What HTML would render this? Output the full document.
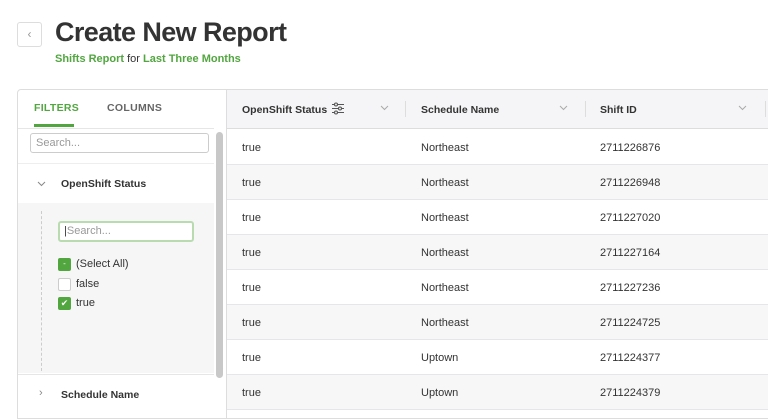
<!DOCTYPE html>
<html><head><meta charset="utf-8"><style>
*{box-sizing:border-box;margin:0;padding:0}
body{width:768px;height:413px;overflow:hidden;background:#fff;font-family:"Liberation Sans",sans-serif;color:#333;position:relative}
.a{position:absolute}
.back{left:17px;top:22px;width:25px;height:25px;border:1px solid #ddd;border-radius:3px;color:#999;font-size:12px;text-align:center;line-height:22px}
h1{position:absolute;left:55px;top:17px;font-size:27px;font-weight:bold;color:#333;letter-spacing:-0.6px}
.sub{left:55px;top:53px;font-size:11px;color:#333}
.g{color:#52a640;font-weight:bold}
.panel{left:17px;top:89px;width:760px;height:330px;border:1px solid #ddd;border-radius:4px 0 0 0}
.side{left:17px;top:89px;width:210px;height:330px;border-right:1px solid #ddd}
.tab{font-size:10.5px;font-weight:bold;top:102px;letter-spacing:0.3px}
.inp{border:1px solid #ccc;border-radius:3px;font-size:11px;color:#999;padding:3px 5px;background:#fff}
.cb{width:13px;height:13px;border-radius:2px;left:58px}
.lbl{left:76px;font-size:11px;color:#333}
.hdr{left:227px;top:90px;width:541px;height:39px;background:#f5f5f7;border-bottom:1px solid #ddd}
.hc{font-size:10.5px;font-weight:bold;top:104px;color:#333}
.car{top:105px}
.row{left:227px;width:541px;height:35px;border-bottom:1px solid #e6e6ea;font-size:11px}
.row span{position:absolute;top:12px}
</style></head><body>
<div class="a back">‹</div>
<h1>Create New Report</h1>
<div class="a sub"><span class="g">Shifts Report</span> for <span class="g">Last Three Months</span></div>
<div class="a panel"></div>
<div class="a hdr"></div>
<div class="a hc" style="left:242px">OpenShift Status</div>
<svg class="a" style="left:331px;top:102px" width="14" height="13" viewBox="0 0 14 13" fill="none" stroke="#555" stroke-width="1.1"><path d="M1 2.5h12M1 6.5h12M1 10.5h12"/><circle cx="5" cy="2.5" r="1.5" fill="#f5f5f7"/><circle cx="9" cy="6.5" r="1.5" fill="#f5f5f7"/><circle cx="5" cy="10.5" r="1.5" fill="#f5f5f7"/></svg>
<svg class="a car" style="left:380px" width="9" height="6" viewBox="0 0 9 6"><path d="M1 1l3.5 3.5L8 1" fill="none" stroke="#aaa" stroke-width="1"/></svg>
<div class="a" style="left:405px;top:101px;width:1px;height:16px;background:#ddd"></div>
<div class="a hc" style="left:421px">Schedule Name</div>
<svg class="a car" style="left:559px" width="9" height="6" viewBox="0 0 9 6"><path d="M1 1l3.5 3.5L8 1" fill="none" stroke="#aaa" stroke-width="1"/></svg>
<div class="a" style="left:585px;top:101px;width:1px;height:16px;background:#ddd"></div>
<div class="a hc" style="left:600px">Shift ID</div>
<svg class="a car" style="left:738px" width="9" height="6" viewBox="0 0 9 6"><path d="M1 1l3.5 3.5L8 1" fill="none" stroke="#aaa" stroke-width="1"/></svg>
<div class="a" style="left:765px;top:101px;width:1px;height:16px;background:#ddd"></div>

<div class="a row" style="top:130px;background:#fff"><span style="left:15px">true</span><span style="left:194px">Northeast</span><span style="left:373px">2711226876</span></div>
<div class="a row" style="top:165px;background:#f7f7f8"><span style="left:15px">true</span><span style="left:194px">Northeast</span><span style="left:373px">2711226948</span></div>
<div class="a row" style="top:200px;background:#fff"><span style="left:15px">true</span><span style="left:194px">Northeast</span><span style="left:373px">2711227020</span></div>
<div class="a row" style="top:235px;background:#f7f7f8"><span style="left:15px">true</span><span style="left:194px">Northeast</span><span style="left:373px">2711227164</span></div>
<div class="a row" style="top:270px;background:#fff"><span style="left:15px">true</span><span style="left:194px">Northeast</span><span style="left:373px">2711227236</span></div>
<div class="a row" style="top:305px;background:#f7f7f8"><span style="left:15px">true</span><span style="left:194px">Northeast</span><span style="left:373px">2711224725</span></div>
<div class="a row" style="top:340px;background:#fff"><span style="left:15px">true</span><span style="left:194px">Uptown</span><span style="left:373px">2711224377</span></div>
<div class="a row" style="top:375px;background:#f7f7f8"><span style="left:15px">true</span><span style="left:194px">Uptown</span><span style="left:373px">2711224379</span></div>

<div class="a side"></div>
<div class="a tab" style="left:34px;color:#52a640">FILTERS</div>
<div class="a" style="left:34px;top:124px;width:40px;height:3px;background:#52a640"></div>
<div class="a tab" style="left:107px;color:#666">COLUMNS</div>
<div class="a" style="left:18px;top:128px;width:196px;height:1px;background:#e6e6e6"></div>
<div class="a inp" style="left:30px;top:133px;width:179px;height:20px">Search...</div>
<div class="a" style="left:18px;top:163px;width:196px;height:1px;background:#eee"></div>
<svg class="a" style="left:37px;top:181px" width="9" height="6" viewBox="0 0 9 6"><path d="M1 1l3.5 3.5L8 1" fill="none" stroke="#888" stroke-width="1"/></svg>
<div class="a" style="left:61px;top:178px;font-size:10.5px;font-weight:bold">OpenShift Status</div>
<div class="a" style="left:18px;top:203px;width:196px;height:170px;background:#f6f6f6"></div>
<div class="a" style="left:41px;top:211px;height:160px;border-left:1px dashed #ccc"></div>
<div class="a inp" style="left:58px;top:221px;width:136px;height:21px;border:2px solid #b9dbb0;color:#999;padding:2px 4px"><span style="color:#333">|</span>Search...</div>
<div class="a cb" style="top:258px;background:#52a640;color:#fff;font-size:8px;text-align:center;line-height:12px">-</div>
<div class="a lbl" style="top:258px">(Select All)</div>
<div class="a cb" style="top:278px;background:#fff;border:1px solid #ccc"></div>
<div class="a lbl" style="top:278px">false</div>
<div class="a cb" style="top:297px;background:#52a640;color:#fff;font-size:9px;text-align:center;line-height:13px">✔</div>
<div class="a lbl" style="top:297px">true</div>
<div class="a" style="left:18px;top:374px;width:196px;height:1px;background:#e6e6e6"></div>
<div class="a" style="left:39px;top:387px;font-size:11px;color:#888">›</div>
<div class="a" style="left:61px;top:389px;font-size:10.5px;font-weight:bold">Schedule Name</div>
<div class="a" style="left:216px;top:132px;width:7px;height:246px;background:#c8c8c8;border-radius:4px"></div>
</body></html>
